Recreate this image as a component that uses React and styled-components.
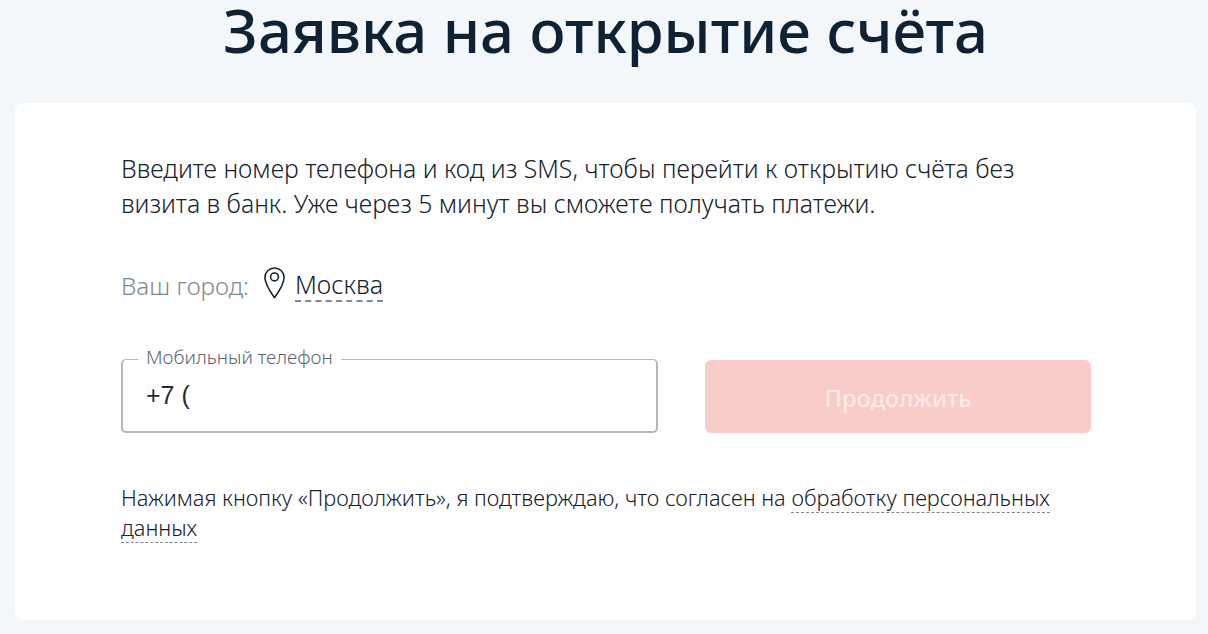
import styled, { createGlobalStyle } from "styled-components";

const Global = createGlobalStyle`
  html, body { margin: 0; padding: 0; background: #f4f7f9; }
  body { font-family: "Noto Sans", "Open Sans", sans-serif; color: #14212e; }
`;

const Page = styled.div`
  width: 1208px;
  height: 634px;
  overflow: hidden;
  padding: 0 12px 14px 15px;
  box-sizing: border-box;
  display: flex;
  flex-direction: column;
`;

const Title = styled.h1`
  margin: 0;
  height: 103px;
  font-size: 59.8px;
  line-height: 60px;
  font-weight: 500;
  text-align: center;
  color: #0f2233;
`;

const Card = styled.section`
  flex: 1;
  background: #fff;
  border-radius: 8px;
  padding: 48px 105px 0 106px;
`;

const Lead = styled.p`
  margin: 0;
  font-size: 24.8px;
  line-height: 35px;
  font-weight: 300;
  color: #16222e;
`;

const CityRow = styled.div`
  display: flex;
  align-items: center;
  margin-top: 46px;
  height: 36px;
  font-size: 24.3px;
  font-weight: 300;
`;

const CityLabel = styled.span`
  color: #7d8993;
`;

const Pin = styled.svg`
  width: 27px;
  height: 36px;
  margin: -6px 7px 0 12px;
`;

const DashLink = styled.span`
  color: #16222e;
  font-weight: 300;
  border-bottom: 1px dashed #7d8993;
`;

const CityLink = styled(DashLink)`
  font-size: 25.1px;
  border-bottom-width: 2px;
  line-height: 31px;
`;

const FormRow = styled.div`
  display: flex;
  align-items: flex-start;
  gap: 47px;
  margin-top: 44px;
`;

const Field = styled.fieldset`
  width: 537px;
  height: 86px;
  box-sizing: border-box;
  margin: 0;
  padding: 0 0 0 15px;
  border: 2px solid #b3b7ba;
  border-top-width: 1px;
  border-radius: 5px;
`;

const FieldLabel = styled.legend`
  padding: 0 8px 4px;
  font-size: 19px;
  line-height: 20px;
  font-weight: 300;
  color: #5a6670;
`;

const PhoneValue = styled.div`
  margin: 9px 0 0 8px;
  font-family: "Liberation Sans", Arial, sans-serif;
  font-size: 25px;
  line-height: 30px;
  color: #222b33;
`;

const Submit = styled.button`
  width: 386px;
  height: 73px;
  margin-top: 13px;
  border: 0;
  border-radius: 6px;
  background: #f9cbc9;
  color: #fde9e7;
  font-family: "Noto Sans", sans-serif;
  font-size: 23.6px;
  font-weight: 500;
  padding: 3px 0 0;
`;

const Note = styled.p`
  margin: 50px 0 0;
  font-size: 21.78px;
  line-height: 30px;
  font-weight: 300;
  color: #16222e;
`;

export default function App() {
  return (
    <Page>
      <Global />
      <Title>Заявка на открытие счёта</Title>
      <Card>
        <Lead>
          Введите номер телефона и код из SMS, чтобы перейти к открытию счёта без
          <br />
          визита в банк. Уже через 5 минут вы сможете получать платежи.
        </Lead>
        <CityRow>
          <CityLabel>Ваш город:</CityLabel>
          <Pin viewBox="0 0 24 32" fill="none" stroke="#16222e" strokeWidth="1.4">
            <path d="M12 30C7 23 3.5 17.5 3.5 12a8.5 8.5 0 0 1 17 0C20.5 17.5 17 23 12 30Z" strokeLinejoin="round" />
            <circle cx="12" cy="11.5" r="3.5" />
          </Pin>
          <CityLink>Москва</CityLink>
        </CityRow>
        <FormRow>
          <Field>
            <FieldLabel>Мобильный телефон</FieldLabel>
            <PhoneValue>+7 (</PhoneValue>
          </Field>
          <Submit type="button">Продолжить</Submit>
        </FormRow>
        <Note>
          Нажимая кнопку «Продолжить», я подтверждаю, что согласен на <DashLink>обработку персональных</DashLink>
          <br />
          <DashLink>данных</DashLink>
        </Note>
      </Card>
    </Page>
  );
}
